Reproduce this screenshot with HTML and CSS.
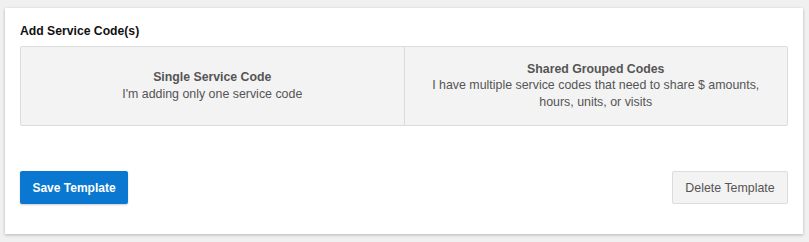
FILE: index.html
```html
<!DOCTYPE html>
<html>
<head>
<meta charset="utf-8">
<link rel="stylesheet" href="styles.css">
</head>
<body>
<div class="card">
  <h2 class="title">Add Service Code(s)</h2>
  <div class="options">
    <div class="option">
      <div class="opt-title">Single Service Code</div>
      <div class="opt-desc">I'm adding only one service code</div>
    </div>
    <div class="option">
      <div class="opt-title">Shared Grouped Codes</div>
      <div class="opt-desc">I have multiple service codes that need to share $ amounts,<br>hours, units, or visits</div>
    </div>
  </div>
  <div class="actions">
    <button class="btn btn-primary">Save Template</button>
    <button class="btn btn-secondary">Delete Template</button>
  </div>
</div>
</body>
</html>
```
FILE: styles.css
```css
html, body {
  margin: 0;
  padding: 0;
  background: #f0f0f0;
}
body {
  padding: 8px 6px 9px 5px;
  font-family: "Liberation Sans", Arial, sans-serif;
}
.card {
  background: #fff;
  box-shadow: 0 1px 3px rgba(0,0,0,0.25);
  padding: 16px 15px 30px 15px;
  box-sizing: border-box;
  height: 226px;
}
.title {
  margin: 0 0 7px 0;
  font-size: 12.2px;
  font-weight: bold;
  color: #111;
  line-height: 15px;
}
.options {
  display: flex;
  border: 1px solid #dcdcdc;
  border-radius: 2px;
  background: #f3f3f3;
  height: 80px;
  box-sizing: border-box;
}
.option {
  flex: 1;
  display: flex;
  flex-direction: column;
  justify-content: center;
  align-items: center;
  text-align: center;
  color: #555;
  font-size: 12.4px;
  line-height: 16.5px;
  padding-bottom: 1px;
}
.option + .option {
  border-left: 1px solid #dcdcdc;
}
.opt-title {
  font-weight: bold;
  font-size: 12.3px;
}
.actions {
  display: flex;
  justify-content: space-between;
  margin-top: 45px;
}
.btn {
  font-family: "Liberation Sans", Arial, sans-serif;
  font-size: 12.4px;
  height: 33px;
  border-radius: 2px;
  cursor: pointer;
}
.btn-primary {
  background: #0a78d1;
  color: #fff;
  border: none;
  width: 108px;
  font-weight: bold;
  font-size: 12px;
  box-shadow: 0 1px 2px rgba(0,0,0,0.2);
}
.btn-secondary {
  background: #f3f3f3;
  color: #555;
  border: 1px solid #dcdcdc;
  width: 116px;
}
```
